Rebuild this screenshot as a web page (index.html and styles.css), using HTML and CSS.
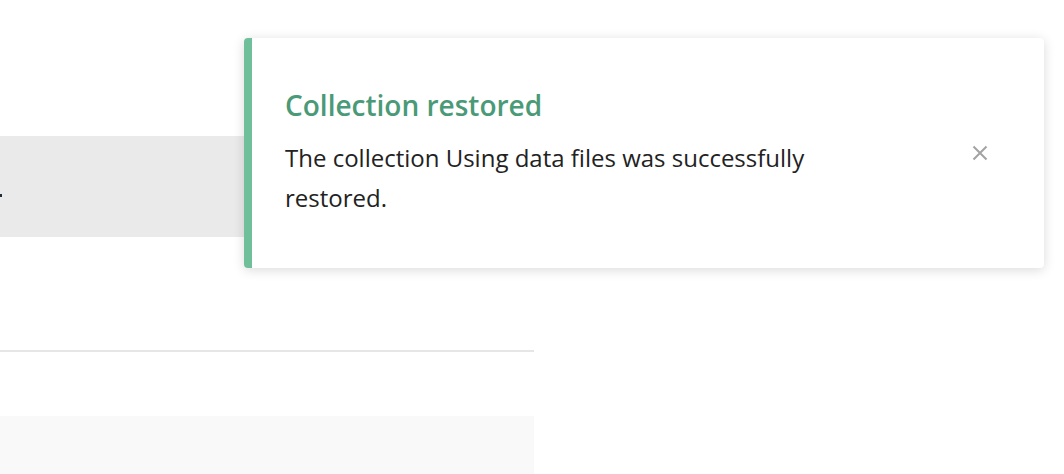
FILE: index.html
```html
<!DOCTYPE html>
<html>
<head>
<meta charset="utf-8">
<link rel="stylesheet" href="styles.css">
</head>
<body>
<div class="page">
  <div class="bar"><span class="bar-mark"></span></div>
  <div class="rule"></div>
  <div class="panel"></div>
</div>
<div class="toast">
  <div class="toast-body">
    <h2 class="toast-title">Collection restored</h2>
    <p class="toast-text">The collection Using data files was successfully restored.</p>
  </div>
  <button class="toast-close" aria-label="Close">
    <svg width="16" height="16" viewBox="0 0 16 16"><path d="M1.5 1.5 L14.5 14.5 M14.5 1.5 L1.5 14.5" stroke="#a3a3a3" stroke-width="2" fill="none"/></svg>
  </button>
</div>
</body>
</html>
```
FILE: styles.css
```css
html, body {
  margin: 0;
  padding: 0;
  background: #ffffff;
  font-family: "Open Sans", "Liberation Sans", sans-serif;
}
.page {
  width: 534px;
  padding-top: 136px;
}
.bar {
  height: 101px;
  background: #eaeaea;
  display: flex;
  align-items: center;
}
.bar-mark {
  display: block;
  width: 2px;
  height: 3px;
  background: #1f2d3d;
  margin-top: 18px;
}
.rule {
  margin-top: 113px;
  height: 2px;
  background: #e6e6e6;
}
.panel {
  margin-top: 64px;
  height: 58px;
  background: #f9f9f9;
}
.toast {
  position: absolute;
  top: 38px;
  left: 244px;
  width: 800px;
  height: 230px;
  box-sizing: border-box;
  background: #ffffff;
  border-left: 8px solid #6fc09a;
  border-radius: 4px;
  box-shadow: 0 2px 12px rgba(0, 0, 0, 0.15);
  display: flex;
  align-items: flex-start;
}
.toast-body {
  padding: 48px 0 0 33px;
  width: 530px;
}
.toast-title {
  margin: 0;
  font-size: 28px;
  font-weight: 600;
  line-height: 38px;
  color: #4a9a77;
}
.toast-text {
  margin: 0;
  padding-top: 14px;
  font-size: 24px;
  line-height: 40px;
  color: #222222;
}
.toast-close {
  margin: 107px 0 0 157px;
  padding: 0;
  border: 0;
  background: none;
  width: 16px;
  height: 16px;
  display: block;
}
.toast-close svg { display: block; }
```
